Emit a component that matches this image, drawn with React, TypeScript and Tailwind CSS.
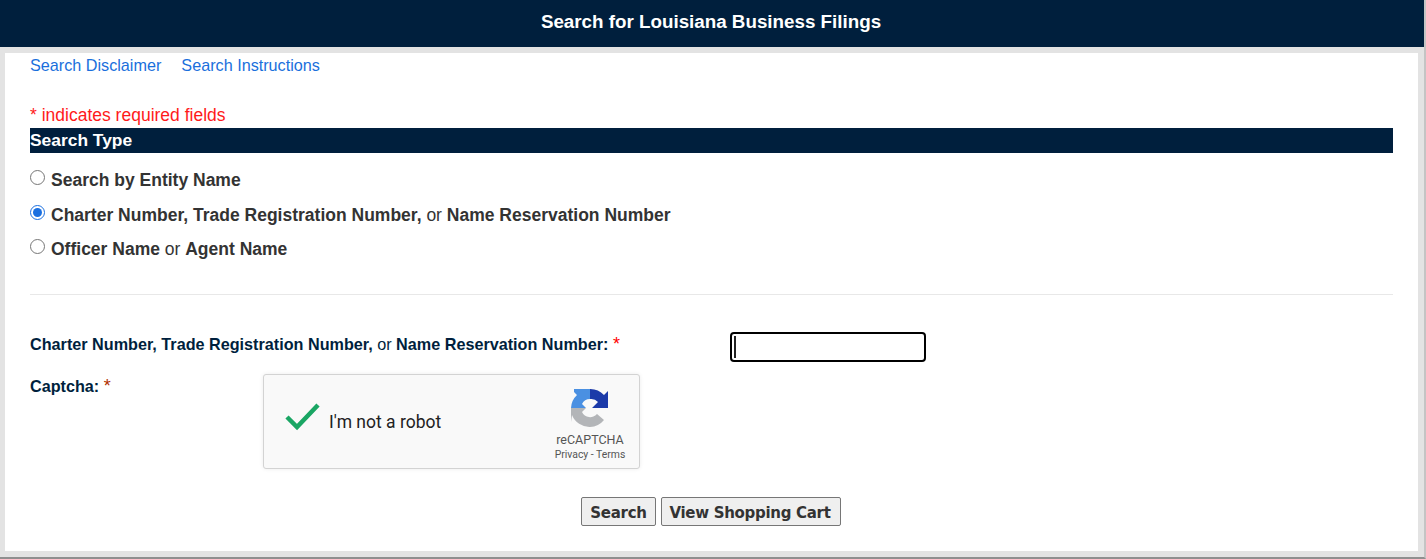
import React from "react";

const Radio = ({ checked = false }: { checked?: boolean }) => (
  <input type="radio" name="searchType" defaultChecked={checked} className="m-0 w-[15px] h-[15px] shrink-0 mr-[6px] -translate-y-[3px] accent-[#1a6fe0]" />
);

const RecaptchaLogo = () => (
  <svg width="38" height="38" viewBox="0 0 38 38" className="block">
    <path d="M19 0 L19 10 A9 9 0 0 0 11 15 L15 19 L0 19 A19 19 0 0 1 6 6 L3 3 L3 0 Z" fill="#4a90e2" />
    <path d="M19 0 A19 19 0 0 1 33 6 L37 2 L37 19 L21 19 L27 13 A9 9 0 0 0 19 10 Z" fill="#1c3aa9" />
    <path d="M0 19 L15 19 L11 23 A9 9 0 0 0 26 25 L33 31 A19 19 0 0 1 19 38 A19 19 0 0 1 1 26 L0 33 Z" fill="#b3b5b8" />
  </svg>
);

export default function App() {
  return (
    <div className="h-[559px] overflow-hidden bg-[#e3e3e3] border-r-2 border-b-2 border-r-[#c4c4c4] border-b-[#8f8f8f] flex flex-col font-['Liberation_Sans',sans-serif]">
      <header className="h-[47px] shrink-0 bg-[#001f3d] text-white font-bold text-[18.8px] flex items-center justify-center pr-[2px] pb-[3px]">
        Search for Louisiana Business Filings
      </header>
      <main className="mx-[5px] mt-[6px] mb-[6px] flex-1 bg-white px-[25px] mr-[6px]">
        <nav className="flex gap-[20px] text-[16.2px] leading-[24px] text-[#1a6fdc] pb-[1px]">
          <a href="#">Search Disclaimer</a>
          <a href="#">Search Instructions</a>
        </nav>
        <p className="mt-[25px] text-[17.5px] leading-[25px] text-[#ff1a1a]">* indicates required fields</p>
        <h2 className="h-[25px] bg-[#001f3d] text-white font-bold text-[17.4px] leading-[25px]">Search Type</h2>

        <div className="mt-[14px] flex flex-col text-[17.5px] leading-[26px] text-[#333]">
          <label className="flex items-center h-[26px]"><Radio /><span><b>Search by Entity Name</b></span></label>
          <label className="flex items-center h-[26px] mt-[9px]"><Radio checked /><span><b>Charter Number, Trade Registration Number,</b> or <b>Name Reservation Number</b></span></label>
          <label className="flex items-center h-[26px] mt-[8px]"><Radio /><span><b>Officer Name</b> or <b>Agent Name</b></span></label>
        </div>

        <hr className="mt-[32px] border-t border-[#e8e8e8]" />

        <div className="mt-[37px] flex items-start">
          <div className="w-[700px] text-[16.2px] leading-[24px] text-[#001f3d]">
            <b>Charter Number, Trade Registration Number,</b> or <b>Name Reservation Number:</b> <span className="text-[18px] text-[#ff0000]">*</span>
          </div>
          <div className="relative">
            <input type="text" readOnly className="block w-[196px] h-[30px] bg-white border-2 border-black rounded-[4px] outline-none caret-transparent" />
            <span className="absolute left-[4px] top-[4px] h-[22px] w-[2px] bg-[#222]" />
          </div>
        </div>

        <div className="mt-[12px] flex items-start">
          <div className="w-[233px] text-[16.2px] leading-[24px] text-[#001f3d]">
            <b>Captcha:</b> <span className="text-[18px] text-[#b03000]">*</span>
          </div>
          <div className="w-[377px] h-[95px] bg-[#f9f9f9] border border-[#d3d3d3] rounded-[3px] shadow-[0_0_4px_rgba(0,0,0,0.08)] flex items-center font-['Roboto',sans-serif]">
            <svg width="38" height="30" viewBox="0 0 38 30" className="ml-[20px] -mt-[10px] shrink-0">
              <path d="M3 15 L13 25 L34 3" fill="none" stroke="#1aa664" strokeWidth="4.5" />
            </svg>
            <span className="ml-[7px] mt-[2px] text-[17.5px] text-[#222]">I'm not a robot</span>
            <div className="ml-auto w-[72px] mr-[13px] mt-[6px] flex flex-col items-center text-[#555]">
              <RecaptchaLogo />
              <span className="text-[12.5px] leading-[14px] mt-[6px]">reCAPTCHA</span>
              <span className="text-[10.4px] leading-[12px] mt-[2px] whitespace-nowrap">Privacy - Terms</span>
            </div>
          </div>
        </div>

        <div className="mt-[28px] flex justify-center gap-[5px] pr-[1px] font-['DejaVu_Sans',sans-serif] font-bold text-[15px] tracking-[-0.3px] text-[#333]">
          <button type="button" className="h-[29px] w-[75px] pt-[3px] bg-[#efefef] border border-[#767676] rounded-[2px]">Search</button>
          <button type="button" className="h-[29px] w-[180px] pt-[3px] pr-[2px] bg-[#efefef] border border-[#767676] rounded-[2px]">View Shopping Cart</button>
        </div>
      </main>
    </div>
  );
}
